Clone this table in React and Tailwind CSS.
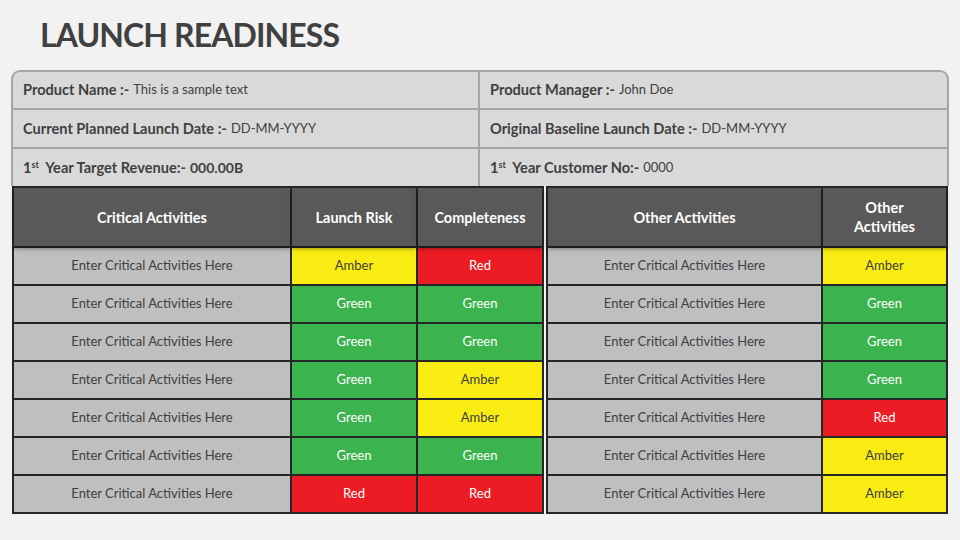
import React from "react";

const rows = [
  ["Amber", "Red", "Amber"],
  ["Green", "Green", "Green"],
  ["Green", "Green", "Green"],
  ["Green", "Amber", "Green"],
  ["Green", "Amber", "Red"],
  ["Green", "Green", "Amber"],
  ["Red", "Red", "Amber"],
];

const statusClass = {
  Amber: "bg-[#f9ec12] text-[#404040]",
  Red: "bg-[#ec1c24] text-white",
  Green: "bg-[#3bb34e] text-white",
};

const InfoCell = ({ label, value, sup, boldValue, h = "h-[37px]" }) => (
  <div className={`flex items-center px-[10px] ${h} text-[#404040]`}>
    <span className="font-bold text-[14.6px]">
      {sup && (
        <>
          1<sup className="text-[9px] -top-[5px]">st</sup>&nbsp;{" "}
        </>
      )}
      {label}
    </span>
    <span className={`${boldValue ? "font-bold text-[14px]" : "text-[13px]"} ml-[4px]`}>
      {value}
    </span>
  </div>
);

const HeadCell = ({ children }) => (
  <div className="bg-[#595959] text-white font-bold text-[14.5px] leading-[19px] flex items-center justify-center text-center relative z-10 shadow-[0_3px_4px_rgba(0,0,0,0.35)]">
    {children}
  </div>
);

const TextCell = () => (
  <div className="bg-[#bfbfbf] text-[#404040] text-[13px] flex items-center justify-center">
    Enter Critical Activities Here
  </div>
);

const StatusCell = ({ status }) => (
  <div className={`${statusClass[status]} text-[13px] flex items-center justify-center`}>
    {status}
  </div>
);

export default function App() {
  return (
    <div
      className="w-[960px] h-[540px] bg-[#f2f2f2] overflow-hidden"
      style={{ fontFamily: "Lato, 'Open Sans', sans-serif" }}
    >
      <h1 className="pl-[40px] pt-[15px] h-[70px] text-[32px] tracking-[-0.9px] font-bold text-[#404040] leading-[40px]">
        LAUNCH READINESS
      </h1>

      <div className="ml-[11px] w-[938px] border-2 border-b-0 border-[#a6a6a6] rounded-t-[9px] bg-[#d9d9d9] grid grid-cols-[467px_1fr]">
        <div className="border-r-2 border-[#a6a6a6]">
          <InfoCell h="h-[36px]" label="Product Name :-" value="This is a sample text" />
          <div className="border-t-2 border-[#a6a6a6]">
            <InfoCell label="Current Planned Launch Date :-" value="DD-MM-YYYY" />
          </div>
          <div className="border-t-2 border-[#a6a6a6]">
            <InfoCell label="Year Target Revenue:-" sup boldValue value="000.00B" />
          </div>
        </div>
        <div>
          <InfoCell h="h-[36px]" label="Product Manager :-" value="John Doe" />
          <div className="border-t-2 border-[#a6a6a6]">
            <InfoCell label="Original Baseline Launch Date :-" value="DD-MM-YYYY" />
          </div>
          <div className="border-t-2 border-[#a6a6a6]">
            <InfoCell label="Year Customer No:-" sup value="0000" />
          </div>
        </div>
      </div>

      <div className="flex gap-[2px] ml-[12px]">
        <div className="grid grid-cols-[276px_124px_124px] grid-rows-[58px_repeat(7,36px)] gap-[2px] p-[2px] bg-[#262626]">
          <HeadCell>Critical Activities</HeadCell>
          <HeadCell>Launch Risk</HeadCell>
          <HeadCell>Completeness</HeadCell>
          {rows.map((r, i) => (
            <React.Fragment key={i}>
              <TextCell />
              <StatusCell status={r[0]} />
              <StatusCell status={r[1]} />
            </React.Fragment>
          ))}
        </div>
        <div className="grid grid-cols-[273px_123px] grid-rows-[58px_repeat(7,36px)] gap-[2px] p-[2px] bg-[#262626]">
          <HeadCell>Other Activities</HeadCell>
          <HeadCell>
            Other
            <br />
            Activities
          </HeadCell>
          {rows.map((r, i) => (
            <React.Fragment key={i}>
              <TextCell />
              <StatusCell status={r[2]} />
            </React.Fragment>
          ))}
        </div>
      </div>
    </div>
  );
}
